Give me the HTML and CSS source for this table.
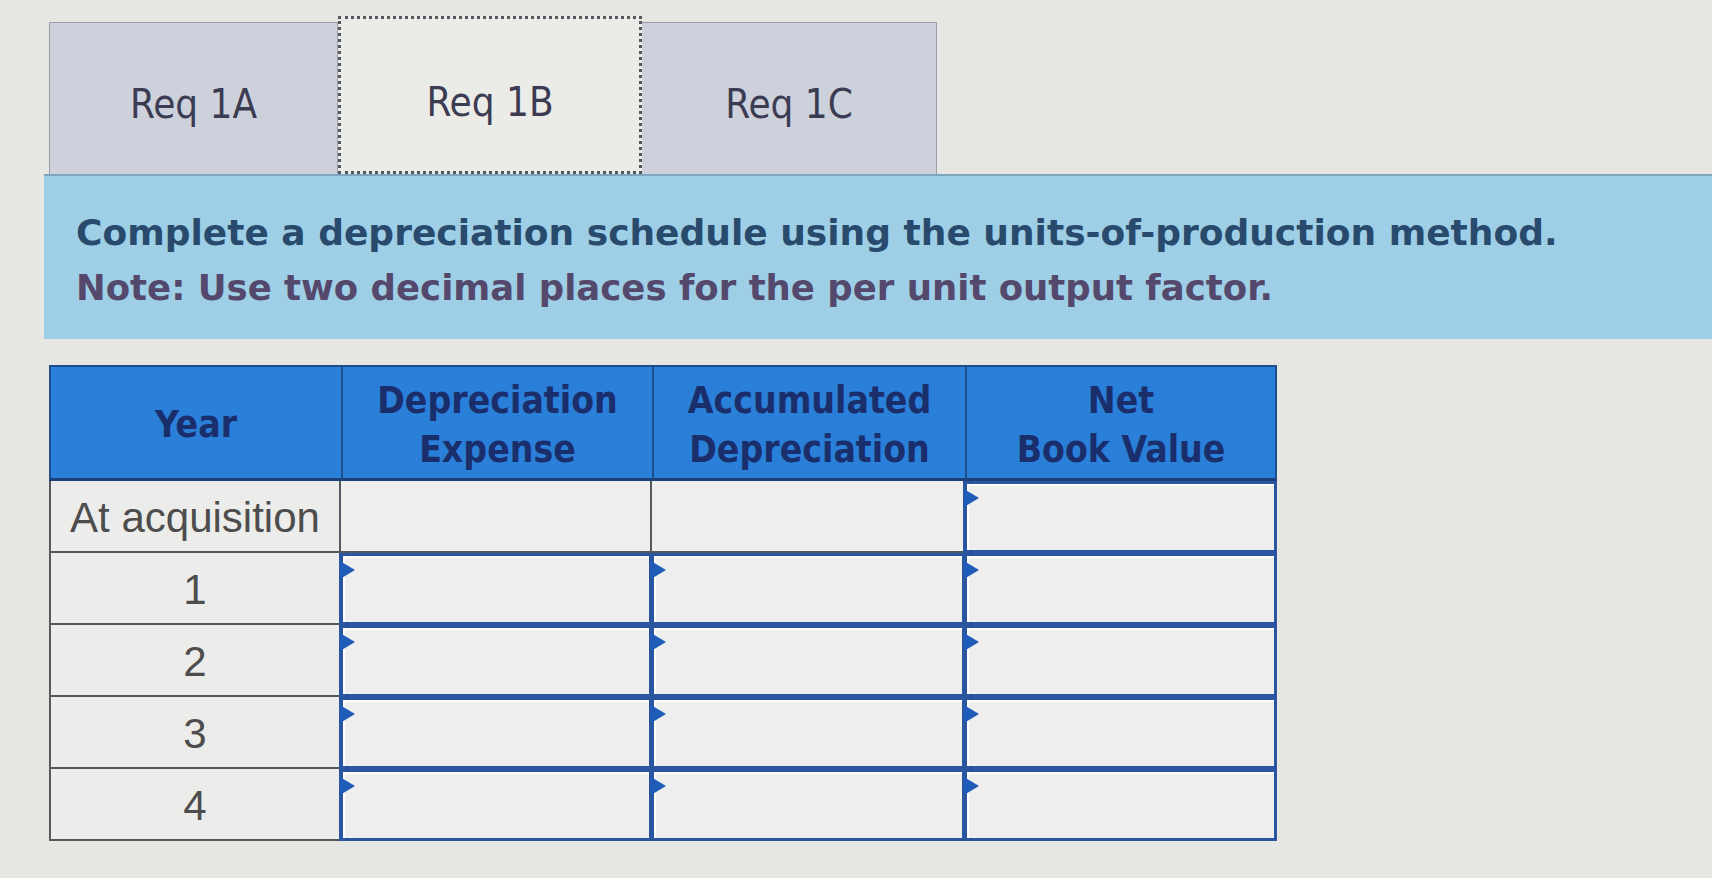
FILE: index.html
```
<!DOCTYPE html>
<html>
<head>
<meta charset="utf-8">
<link rel="stylesheet" href="styles.css">
</head>
<body>
<div class="page">
  <div class="tabs">
    <div class="tab">Req 1A</div>
    <div class="tab active">Req 1B</div>
    <div class="tab">Req 1C</div>
  </div>
  <div class="banner">
    <p class="line1">Complete a depreciation schedule using the units-of-production method.</p>
    <p class="line2">Note: Use two decimal places for the per unit output factor.</p>
  </div>
  <div class="sched">
    <div class="hd">Year</div>
    <div class="hd">Depreciation<br>Expense</div>
    <div class="hd">Accumulated<br>Depreciation</div>
    <div class="hd">Net<br>Book Value</div>

    <div class="yr">At acquisition</div>
    <div class="cell plain"></div>
    <div class="cell plain"></div>
    <div class="cell input"><span class="flag"></span></div>

    <div class="yr">1</div>
    <div class="cell input"><span class="flag"></span></div>
    <div class="cell input"><span class="flag"></span></div>
    <div class="cell input"><span class="flag"></span></div>

    <div class="yr">2</div>
    <div class="cell input"><span class="flag"></span></div>
    <div class="cell input"><span class="flag"></span></div>
    <div class="cell input"><span class="flag"></span></div>

    <div class="yr">3</div>
    <div class="cell input"><span class="flag"></span></div>
    <div class="cell input"><span class="flag"></span></div>
    <div class="cell input"><span class="flag"></span></div>

    <div class="yr">4</div>
    <div class="cell input"><span class="flag"></span></div>
    <div class="cell input"><span class="flag"></span></div>
    <div class="cell input"><span class="flag"></span></div>
  </div>
</div>
</body>
</html>
```

FILE: styles.css
```
html, body {
  margin: 0;
  padding: 0;
  background: #e6e6e3;
}
.page {
  padding-top: 16px;
  width: 1712px;
  height: 878px;
  overflow: hidden;
  box-sizing: border-box;
}
.tabs {
  display: flex;
  align-items: flex-end;
  margin-left: 49px;
  height: 158px;
}
.tab {
  width: 289px;
  height: 152px;
  box-sizing: border-box;
  background: #cdd1dc;
  border: 1px solid #9a9eaa;
  border-bottom: none;
  display: flex;
  align-items: center;
  justify-content: center;
  font-family: "DejaVu Sans Condensed", "DejaVu Sans", sans-serif;
  font-size: 40px;
  color: #3b3c52;
  padding-top: 10px;
}
.tab + .tab {
  border-left: none;
}
.tab.active {
  width: 304px;
  height: 158px;
  background: #ebebe8;
  border: 3px dotted #55575f;
  padding-top: 14px;
}
.tab:last-child {
  width: 295px;
}
.banner {
  margin-left: 44px;
  height: 165px;
  box-sizing: border-box;
  background: #9fcfe6;
  border-top: 2px solid #7fa6bf;
  padding: 29px 0 0 32px;
  font-family: "DejaVu Sans", sans-serif;
  font-size: 36px;
  font-weight: bold;
}
.banner p {
  margin: 0;
  line-height: 55px;
  white-space: nowrap;
}
.line1 {
  color: #284a6c;
}
.line2 {
  color: #54486c;
  font-size: 35.5px;
}
.sched {
  margin: 26px 0 0 49px;
  display: grid;
  grid-template-columns: 292px 311px 313px 312px;
  grid-template-rows: 116px repeat(5, 72px);
  width: 1228px;
}
.hd {
  background: #2a7fd8;
  border-top: 2px solid #1f4f8a;
  border-left: 2px solid #1f4f8a;
  border-bottom: 3px solid #1c3f78;
  display: flex;
  align-items: center;
  justify-content: center;
  text-align: center;
  font-family: "DejaVu Sans Condensed", "DejaVu Sans", sans-serif;
  font-weight: bold;
  font-size: 37px;
  line-height: 49px;
  color: #1b2e6c;
  padding-top: 4px;
  box-sizing: border-box;
}
.hd:nth-child(4) {
  border-right: 2px solid #1f4f8a;
}
.yr {
  display: flex;
  align-items: center;
  justify-content: center;
  font-family: "Liberation Sans", Arial, sans-serif;
  font-size: 42px;
  color: #4d4d4d;
  background: #ececea;
  border-left: 2px solid #555a60;
  border-bottom: 2px solid #555a60;
  border-right: 2px solid #555a60;
  box-sizing: border-box;
  padding-top: 4px;
}
.cell {
  position: relative;
  background: #eeeeec;
  box-sizing: border-box;
}
.cell.plain {
  border-bottom: 2px solid #555a60;
  border-right: 2px solid #555a60;
}
.cell.input {
  border: 3px solid #2a55a0;
  border-left-width: 4px;
  margin-left: -2px;
  box-shadow: inset 0 2px 0 #ffffff, inset 2px 0 0 #ffffff;
}
.flag {
  position: absolute;
  left: -3px;
  top: 5px;
  width: 0;
  height: 0;
  border-top: 9px solid transparent;
  border-bottom: 9px solid transparent;
  border-left: 15px solid #1f5cba;
}
```
